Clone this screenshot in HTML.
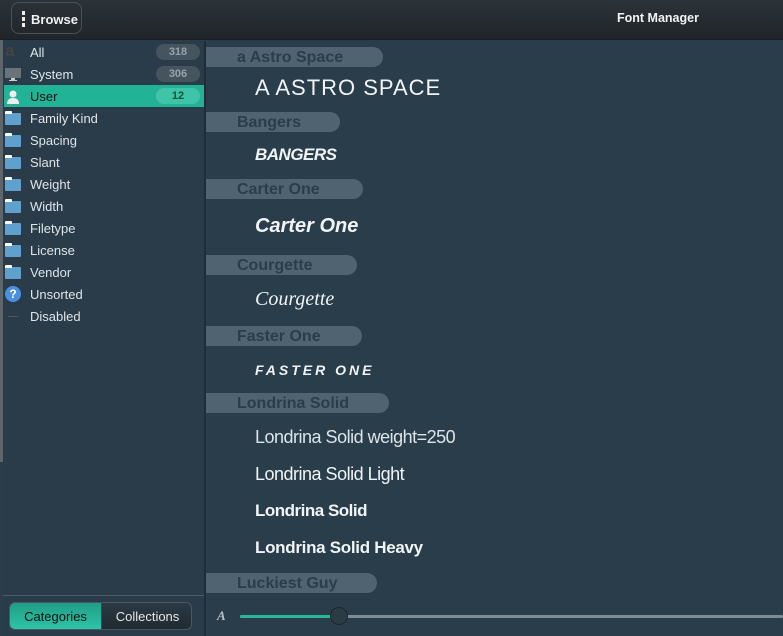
<!DOCTYPE html>
<html><head><meta charset="utf-8"><style>
*{margin:0;padding:0;box-sizing:border-box}
body{width:783px;height:636px;overflow:hidden;background:#2a3d4a;font-family:"Liberation Sans","DejaVu Sans",sans-serif;position:relative;color:#e4e8ea}
.hdr{position:absolute;left:0;top:0;width:783px;height:40px;background:linear-gradient(#2c3338,#1f2529);border-bottom:1px solid #1a1f23}
.browse{position:absolute;left:11px;top:2px;width:71px;height:32px;border:1px solid #4a5258;border-radius:8px;font-weight:bold;font-size:13px;color:#f0f0f0;padding:9px 0 0 19px}
.dots{position:absolute;left:10px;top:8px;width:3px}
.dots i{display:block;width:3px;height:4px;background:#eee;margin-bottom:2px}
.title{position:absolute;left:560px;width:196px;top:11px;text-align:center;font-weight:bold;font-size:12.5px;color:#f2f2f2}
.strip{position:absolute;left:0;top:40px;width:3px;height:422px;background:#5d666d}
.side{position:absolute;left:3px;top:41px;width:201px;height:595px;background:#2a3c49}
.div{position:absolute;left:204px;top:41px;width:2px;height:595px;background:#1f2d37}
.row{position:absolute;left:1px;width:200px;height:22px;font-size:13px;color:#dfe4e7;padding:4px 0 0 26px}
.row.sel{background:#22b397;color:#111}
.badge{position:absolute;right:4px;top:3px;width:44px;height:16px;border-radius:8px;background:#46545e;color:#97a3aa;font-size:11px;text-align:center;line-height:16px;font-weight:bold}
.sel .badge{background:#3fc3a9;color:#153;}
.ic{position:absolute;left:1px;top:5px}
.fold{width:16px;height:12px;background:#5fa0cc;border-radius:1px;position:absolute;left:1px;top:6px}
.fold:before{content:"";position:absolute;left:0;top:-2px;width:7px;height:3px;background:#fff;border-radius:1px 1px 0 0}
.hl{position:absolute;left:3px;top:595px;width:201px;height:1px;background:#4c5d68}
.tabs{position:absolute;left:9px;top:602px;width:183px;height:28px;border:1px solid #495860;border-radius:6px;overflow:hidden;font-size:13px}
.tabs div{position:absolute;top:0;height:28px;line-height:27px;text-align:center}
.pill{position:absolute;left:206px;height:20px;background:#4f6470;border-radius:0 10px 10px 0;font-weight:bold;font-size:16px;color:#2b3d4a;padding-left:31px;line-height:22px}
.pv{position:absolute;left:255px;color:#f0f4f6;white-space:nowrap}
</style></head><body>
<div class="hdr">
<div class="browse"><div class="dots"><i></i><i></i><i></i></div>Browse</div>
<div class="title">Font Manager</div>
</div>
<div class="strip"></div>
<div class="side">
<div class="row" style="top:0"><span class="ic" style="color:#444;font-weight:bold;font-size:17px;top:0">a</span>All<span class="badge">318</span></div>
<div class="row" style="top:22px"><svg class="ic" width="16" height="14"><rect x="0" y="0" width="16" height="10" fill="#6a737a"/><rect x="6" y="10" width="4" height="2" fill="#ccc"/><rect x="4" y="12" width="8" height="1" fill="#ccc"/></svg>System<span class="badge">306</span></div>
<div class="row sel" style="top:44px"><svg class="ic" width="16" height="14"><circle cx="8" cy="4" r="3.5" fill="#eee"/><path d="M2 14 Q2 8 8 8 Q14 8 14 14Z" fill="#eee"/></svg>User<span class="badge">12</span></div>
<div class="row" style="top:66px"><span class="fold"></span>Family Kind</div>
<div class="row" style="top:88px"><span class="fold"></span>Spacing</div>
<div class="row" style="top:110px"><span class="fold"></span>Slant</div>
<div class="row" style="top:132px"><span class="fold"></span>Weight</div>
<div class="row" style="top:154px"><span class="fold"></span>Width</div>
<div class="row" style="top:176px"><span class="fold"></span>Filetype</div>
<div class="row" style="top:198px"><span class="fold"></span>License</div>
<div class="row" style="top:220px"><span class="fold"></span>Vendor</div>
<div class="row" style="top:242px"><span class="ic" style="width:16px;height:16px;border-radius:8px;background:#4a8fe0;color:#fff;font-size:12px;font-weight:bold;text-align:center;line-height:16px;top:3px">?</span>Unsorted</div>
<div class="row" style="top:264px"><span class="ic" style="width:10px;height:1px;background:#555;top:11px;left:4px"></span>Disabled</div>
</div>
<div class="div"></div>
<div class="hl"></div>
<div class="tabs"><div style="left:0;width:91px;background:linear-gradient(#1f9e86,#2fc7aa);color:#111">Categories</div><div style="left:91px;width:92px;background:linear-gradient(#2c3a44,#1f2930);color:#e6e6e6;border-left:1px solid #3a4750">Collections</div></div>

<div class="pill" style="top:47px;width:177px">a Astro Space</div>
<div class="pv" style="top:75px;font-size:22px;letter-spacing:1px">A ASTRO SPACE</div>
<div class="pill" style="top:112px;width:134px">Bangers</div>
<div class="pv" style="top:145px;font-size:17px;font-weight:bold;font-style:italic;letter-spacing:-0.5px">BANGERS</div>
<div class="pill" style="top:179px;width:157px">Carter One</div>
<div class="pv" style="top:215px;font-size:20px;font-weight:bold;font-style:italic">Carter One</div>
<div class="pill" style="top:255px;width:151px">Courgette</div>
<div class="pv" style="top:288px;font-size:20px;font-style:italic;font-family:'Liberation Serif',serif">Courgette</div>
<div class="pill" style="top:326px;width:156px">Faster One</div>
<div class="pv" style="top:362px;font-size:14px;font-weight:bold;font-style:italic;letter-spacing:3px">FASTER ONE</div>
<div class="pill" style="top:393px;width:183px">Londrina Solid</div>
<div class="pv" style="top:427px;font-size:18px;font-weight:normal;color:#dde4e8;letter-spacing:-0.5px">Londrina Solid weight=250</div>
<div class="pv" style="top:464px;font-size:18px;letter-spacing:-0.5px">Londrina Solid Light</div>
<div class="pv" style="top:501px;font-size:17px;font-weight:bold;letter-spacing:-0.5px">Londrina Solid</div>
<div class="pv" style="top:538px;font-size:17px;font-weight:bold;letter-spacing:-0.3px">Londrina Solid Heavy</div>
<div class="pill" style="top:573px;width:171px">Luckiest Guy</div>

<div style="position:absolute;left:217px;top:608px;font-family:'Liberation Serif',serif;font-style:italic;font-weight:bold;font-size:13px;color:#b8c2c8">A</div>
<div style="position:absolute;left:240px;top:615px;width:543px;height:3px;background:#7d8c95;border-radius:2px"></div>
<div style="position:absolute;left:240px;top:615px;width:99px;height:3px;background:#27b898;border-radius:2px"></div>
<div style="position:absolute;left:330px;top:607px;width:18px;height:18px;border-radius:9px;background:#2b3c47;border:1px solid #1b262d"></div>
</body></html>
